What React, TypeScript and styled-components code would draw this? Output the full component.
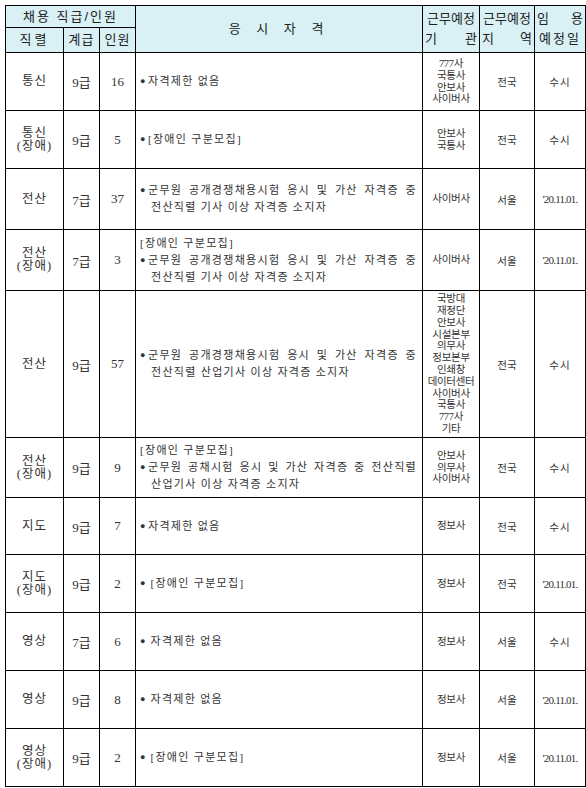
import styled, { createGlobalStyle } from "styled-components";

const GlobalStyle = createGlobalStyle`
  html, body {
    margin: 0;
    padding: 0;
    background: #ffffff;
  }
  body {
    font-family: "Liberation Serif", "Noto Sans CJK KR", serif;
    color: #333333;
  }
`;

type Row = {
  kind: string[];
  grade: string;
  count: string;
  qual: { lead?: string; bullet: string[]; gap?: boolean; spread?: boolean };
  org: string[];
  area: string;
  date: string;
  h?: number;
};

const rows: Row[] = [
  {
    kind: ["통신"],
    grade: "9급",
    count: "16",
    qual: { bullet: ["자격제한 없음"] },
    org: ["777사", "국통사", "안보사", "사이버사"],
    area: "전국",
    date: "수시",
    h: 58,
  },
  {
    kind: ["통신", "(장애)"],
    grade: "9급",
    count: "5",
    qual: { bullet: ["[장애인 구분모집]"] },
    org: ["안보사", "국통사"],
    area: "전국",
    date: "수시",
    h: 58,
  },
  {
    kind: ["전산"],
    grade: "7급",
    count: "37",
    qual: {
      bullet: ["군무원 공개경쟁채용시험 응시 및 가산 자격증 중", "전산직렬 기사 이상 자격증 소지자"],
      spread: true,
    },
    org: ["사이버사"],
    area: "서울",
    date: "'20.11.01.",
    h: 61,
  },
  {
    kind: ["전산", "(장애)"],
    grade: "7급",
    count: "3",
    qual: {
      lead: "[장애인 구분모집]",
      bullet: ["군무원 공개경쟁채용시험 응시 및 가산 자격증 중", "전산직렬 기사 이상 자격증 소지자"],
      spread: true,
    },
    org: ["사이버사"],
    area: "서울",
    date: "'20.11.01.",
    h: 61,
  },
  {
    kind: ["전산"],
    grade: "9급",
    count: "57",
    qual: {
      bullet: ["군무원 공개경쟁채용시험 응시 및 가산 자격증 중", "전산직렬 산업기사 이상 자격증 소지자"],
      spread: true,
    },
    org: [
      "국방대",
      "재정단",
      "안보사",
      "시설본부",
      "의무사",
      "정보본부",
      "인쇄창",
      "데이터센터",
      "사이버사",
      "국통사",
      "777사",
      "기타",
    ],
    area: "전국",
    date: "수시",
    h: 147,
  },
  {
    kind: ["전산", "(장애)"],
    grade: "9급",
    count: "9",
    qual: {
      lead: "[장애인 구분모집]",
      bullet: ["군무원 공채시험 응시 및 가산 자격증 중 전산직렬", "산업기사 이상 자격증 소지자"],
      spread: true,
    },
    org: ["안보사", "의무사", "사이버사"],
    area: "전국",
    date: "수시",
    h: 60,
  },
  {
    kind: ["지도"],
    grade: "9급",
    count: "7",
    qual: { bullet: ["자격제한 없음"] },
    org: ["정보사"],
    area: "전국",
    date: "수시",
    h: 57,
  },
  {
    kind: ["지도", "(장애)"],
    grade: "9급",
    count: "2",
    qual: { bullet: ["[장애인 구분모집]"], gap: true },
    org: ["정보사"],
    area: "전국",
    date: "'20.11.01.",
    h: 58,
  },
  {
    kind: ["영상"],
    grade: "7급",
    count: "6",
    qual: { bullet: ["자격제한 없음"], gap: true },
    org: ["정보사"],
    area: "서울",
    date: "수시",
    h: 58,
  },
  {
    kind: ["영상"],
    grade: "9급",
    count: "8",
    qual: { bullet: ["자격제한 없음"], gap: true },
    org: ["정보사"],
    area: "서울",
    date: "'20.11.01.",
    h: 58,
  },
  {
    kind: ["영상", "(장애)"],
    grade: "9급",
    count: "2",
    qual: { bullet: ["[장애인 구분모집]"], gap: true },
    org: ["정보사"],
    area: "서울",
    date: "'20.11.01.",
    h: 58,
  },
];

const widths = [58, 36, 36, 287, 57, 55, 51];

export default function App() {
  return (
    <>
      <GlobalStyle />
      <Page>
        <Table>
          <colgroup>
            {widths.map((w, i) => (
              <col key={i} style={{ width: w }} />
            ))}
          </colgroup>
          <thead>
            <HeadRow $h={22}>
              <Th colSpan={3} $spacing={2}>
                채용 직급/인원
              </Th>
              <Th rowSpan={2} $spacing={6}>
                응 시 자 격
              </Th>
              <Th rowSpan={2}>
                <HeadLine>근무예정</HeadLine>
                <HeadLine $spread>기 관</HeadLine>
              </Th>
              <Th rowSpan={2}>
                <HeadLine>근무예정</HeadLine>
                <HeadLine $spread>지 역</HeadLine>
              </Th>
              <Th rowSpan={2}>
                <HeadLine $spread>임 용</HeadLine>
                <HeadLine $tight>예정일</HeadLine>
              </Th>
            </HeadRow>
            <HeadRow $h={25}>
              <Th $spacing={3}>직렬</Th>
              <Th>계급</Th>
              <Th>인원</Th>
            </HeadRow>
          </thead>
          <tbody>
            {rows.map((r, i) => (
              <BodyRow key={i} $h={r.h}>
                <KindCell>
                  {r.kind.map((k) => (
                    <KindLine key={k}>{k}</KindLine>
                  ))}
                </KindCell>
                <NumCell>{r.grade}</NumCell>
                <NumCell>{r.count}</NumCell>
                <QualCell>
                  {r.qual.lead && <QualLine>{r.qual.lead}</QualLine>}
                  {r.qual.bullet.map((b, j) => (
                    <QualLine
                      key={j}
                      $indent={j > 0}
                      $spread={r.qual.spread && j === 0}
                    >
                      {j === 0 && <Bullet $gap={r.qual.gap}>●</Bullet>}
                      {b}
                    </QualLine>
                  ))}
                </QualCell>
                <OrgCell>
                  {r.org.map((o) => (
                    <OrgLine key={o}>{o}</OrgLine>
                  ))}
                </OrgCell>
                <SmallCell>{r.area}</SmallCell>
                <DateCell $date={r.date.startsWith("'")}>{r.date}</DateCell>
              </BodyRow>
            ))}
          </tbody>
        </Table>
      </Page>
    </>
  );
}

const Page = styled.div`
  padding: 5px 0 0 5px;
`;

const Table = styled.table`
  width: 580px;
  table-layout: fixed;
  border-collapse: collapse;
  border: 1.5px solid #000;

  td,
  th {
    border: 1px solid #000;
    padding: 0;
  }
`;

const HeadRow = styled.tr<{ $h: number }>`
  height: ${(p) => p.$h}px;
`;

const Th = styled.th<{ $spacing?: number }>`
  background: #d9f1f5;
  font-family: "Liberation Sans", "Noto Sans CJK KR", sans-serif;
  font-weight: 400;
  font-size: 13px;
  line-height: 20px;
  color: #222;
  text-align: center;
  vertical-align: middle;
  letter-spacing: ${(p) => p.$spacing ?? 1}px;
`;

const HeadLine = styled.div<{ $spread?: boolean; $tight?: boolean }>`
  padding: 0 2px;
  letter-spacing: ${(p) => (p.$tight ? "2px" : "0")};
  white-space: nowrap;
  text-align: ${(p) => (p.$spread ? "justify" : "center")};
  text-align-last: ${(p) => (p.$spread ? "justify" : "center")};
`;

const BodyRow = styled.tr<{ $h?: number }>`
  height: ${(p) => (p.$h ? `${p.$h}px` : "auto")};
`;

const KindCell = styled.td`
  text-align: center;
  vertical-align: middle;
  font-size: 12.5px;
  line-height: 13px;
  letter-spacing: 1px;
`;

const KindLine = styled.div``;

const NumCell = styled.td`
  text-align: center;
  vertical-align: middle;
  font-size: 13px;
`;

const QualCell = styled.td`
  vertical-align: middle;
  padding: 0 5px 0 4px !important;
  font-size: 11px;
  line-height: 17px;
  letter-spacing: 1.3px;
`;

const QualLine = styled.div<{ $indent?: boolean; $spread?: boolean }>`
  white-space: nowrap;
  padding-left: ${(p) => (p.$indent ? "11px" : "0")};
  text-align: ${(p) => (p.$spread ? "justify" : "left")};
  text-align-last: ${(p) => (p.$spread ? "justify" : "left")};
`;

const Bullet = styled.span<{ $gap?: boolean }>`
  display: inline-block;
  font-size: 9px;
  letter-spacing: 0;
  vertical-align: 1px;
  margin-right: ${(p) => (p.$gap ? "5px" : "2.5px")};
`;

const OrgCell = styled.td`
  text-align: center;
  vertical-align: middle;
  font-size: 10.5px;
  line-height: 11.8px;
  letter-spacing: -0.3px;
`;

const OrgLine = styled.div`
  white-space: nowrap;
`;

const SmallCell = styled.td`
  text-align: center;
  vertical-align: middle;
  font-size: 10.5px;
`;

const DateCell = styled.td<{ $date?: boolean }>`
  text-align: center;
  vertical-align: middle;
  font-size: ${(p) => (p.$date ? "11px" : "10.5px")};
  letter-spacing: ${(p) => (p.$date ? "-0.8px" : "1px")};
  white-space: nowrap;
`;
